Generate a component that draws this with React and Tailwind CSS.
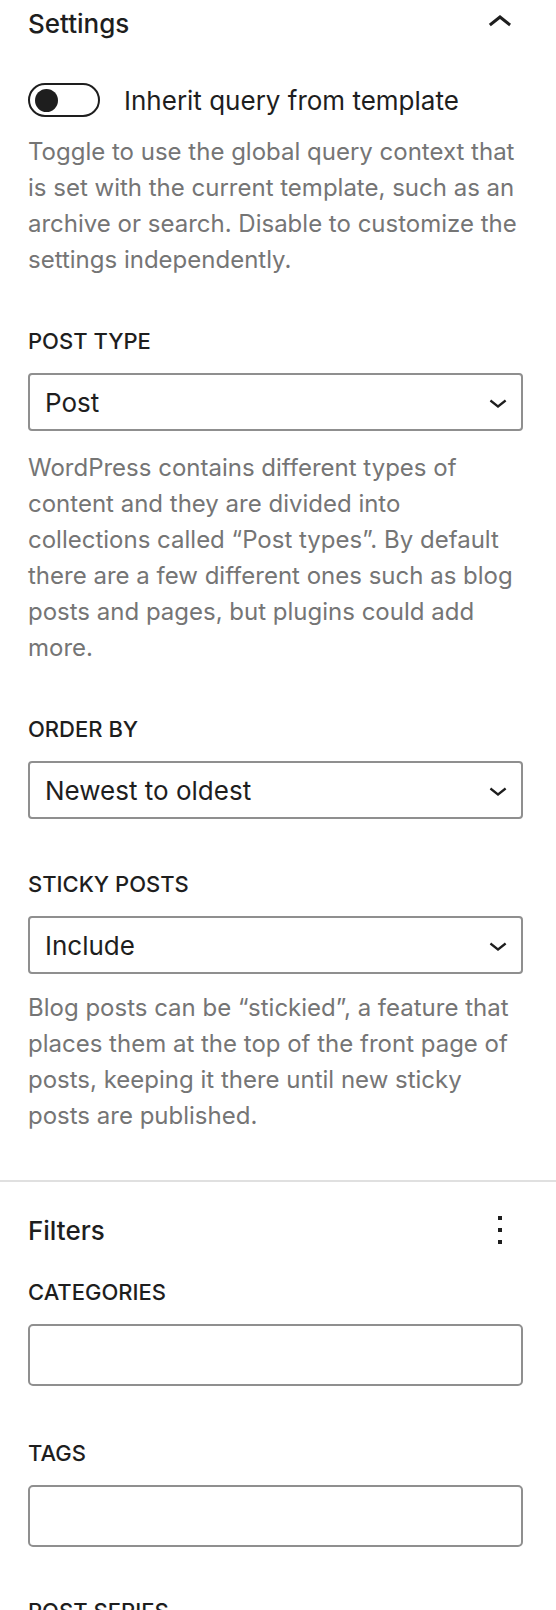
import React from "react";

function ChevronDown() {
  return (
    <svg width="36" height="36" viewBox="0 0 24 24" className="shrink-0">
      <path d="M17.5 11.6L12 16l-5.5-4.4.9-1.2L12 14l4.6-3.6 1 1.2z" fill="#1e1e1e" />
    </svg>
  );
}

function Label({ children }) {
  return (
    <div className="h-[30px] flex items-center text-[22px] font-medium uppercase text-[#1e1e1e]">
      {children}
    </div>
  );
}

function Select({ value }) {
  return (
    <div className="mt-[17px] h-[58px] rounded-[4px] border-2 border-[#8f8f8f] flex items-center justify-between pl-[15px] pr-[5px] text-[26px] text-[#1e1e1e]">
      <span>{value}</span>
      <ChevronDown />
    </div>
  );
}

function Help({ children, className = "" }) {
  return (
    <p className={"text-[24px] leading-[36px] text-[#757575] " + className}>{children}</p>
  );
}

export default function App() {
  return (
    <div className="w-[556px] h-[1610px] overflow-hidden bg-white font-['Inter',sans-serif] text-[#1e1e1e]">
      <div className="pl-[28px] pr-[33px] pb-[46px] border-b-2 border-[#e0e0e0]">
        <div className="h-[46px] flex items-center justify-between">
          <span className="text-[26px] font-medium">Settings</span>
          <svg width="48" height="48" viewBox="0 0 24 24" className="mr-[-1px]">
            <path d="M6.5 12.4L12 8l5.5 4.4-.9 1.2L12 10l-4.6 3.6-1-1.2z" fill="#1e1e1e" />
          </svg>
        </div>
        <div className="mt-[36px] h-[36px] flex items-center gap-[24px]">
          <div className="w-[72px] h-[34px] rounded-full border-2 border-[#1e1e1e] flex items-center pl-[5px]">
            <div className="w-[23px] h-[23px] rounded-full bg-[#1e1e1e]" />
          </div>
          <span className="text-[26px]">Inherit query from template</span>
        </div>
        <Help className="mt-[16px]">
          Toggle to use the global query context that is set with the current template, such as an archive or search. Disable to customize the settings independently.
        </Help>

        <div className="mt-[48px]">
          <Label>Post type</Label>
          <Select value="Post" />
          <Help className="mt-[19px]">
            WordPress contains different types of content and they are divided into collections called “Post types”. By default there are a few different ones such as blog posts and pages, but plugins could add more.
          </Help>
        </div>

        <div className="mt-[48px]">
          <Label>Order by</Label>
          <Select value="Newest to oldest" />
        </div>

        <div className="mt-[50px]">
          <Label>Sticky posts</Label>
          <Select value="Include" />
          <Help className="mt-[16px]">
            Blog posts can be “stickied”, a feature that places them at the top of the front page of posts, keeping it there until new sticky posts are published.
          </Help>
        </div>
      </div>

      <div className="pl-[28px] pr-[33px]">
        <div className="mt-[24px] h-[48px] flex items-center justify-between">
          <span className="text-[26px] font-medium">Filters</span>
          <svg width="48" height="48" viewBox="0 0 24 24" className="mr-[-1px]">
            <path d="M13 19h-2v-2h2v2zm0-6h-2v-2h2v2zm0-6h-2V5h2v2z" fill="#1e1e1e" />
          </svg>
        </div>
        <div className="mt-[23px]">
          <Label>Categories</Label>
          <div className="mt-[17px] h-[62px] rounded-[5px] border-[2.5px] border-[#8f8f8f]" />
        </div>
        <div className="mt-[52px]">
          <Label>Tags</Label>
          <div className="mt-[17px] h-[62px] rounded-[5px] border-[2.5px] border-[#8f8f8f]" />
        </div>
        <div className="mt-[49px]">
          <Label>Post series</Label>
        </div>
      </div>
    </div>
  );
}
